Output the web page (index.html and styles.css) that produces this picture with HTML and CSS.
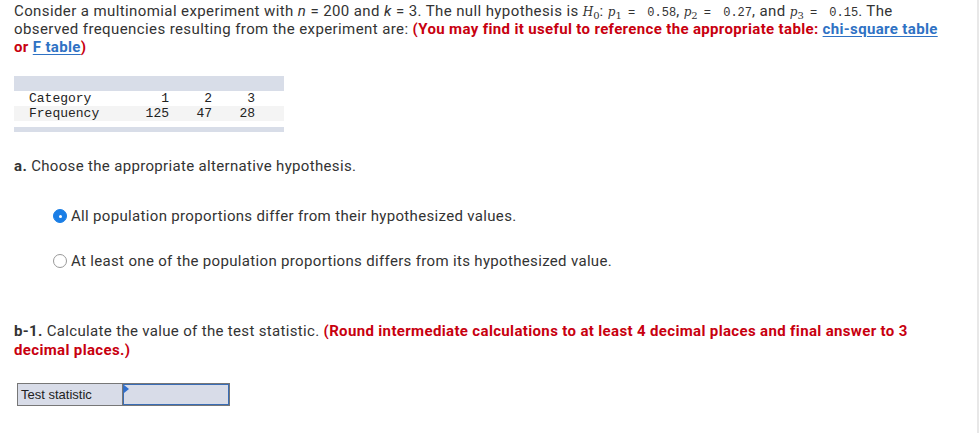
FILE: index.html
```html
<!DOCTYPE html>
<html>
<head>
<meta charset="utf-8">
<link rel="stylesheet" href="styles.css">
</head>
<body>
<div class="page">
  <p class="intro">Consider a multinomial experiment with <i>n</i> = 200 and <i>k</i> = 3. The null hypothesis is <span class="m">H</span><sub class="s">0</sub>: <span class="m">p</span><sub class="s">1</sub> <span class="mono">= 0.58</span>, <span class="m">p</span><sub class="s">2</sub> <span class="mono">= 0.27</span>, and <span class="m">p</span><sub class="s">3</sub> <span class="mono">= 0.15</span>. The<br>observed frequencies resulting from the experiment are: <b class="red">(You may find it useful to reference the appropriate table: <a href="#">chi-square table</a> or <a href="#">F table</a>)</b></p>

  <div class="datatable">
    <div class="band"></div>
    <div class="row">
      <span class="lbl">Category</span><span class="num">1</span><span class="num">2</span><span class="num">3</span>
    </div>
    <div class="row alt">
      <span class="lbl">Frequency</span><span class="num">125</span><span class="num">47</span><span class="num">28</span>
    </div>
    <div class="band thin"></div>
  </div>

  <p class="q"><b>a.</b> Choose the appropriate alternative hypothesis.</p>

  <div class="options">
    <label class="opt"><span class="radio on"></span>All population proportions differ from their hypothesized values.</label>
    <label class="opt"><span class="radio"></span>At least one of the population proportions differs from its hypothesized value.</label>
  </div>

  <p class="q q2"><b>b-1.</b> Calculate the value of the test statistic. <b class="red">(Round intermediate calculations to at least 4 decimal places and final answer to 3 decimal places.)</b></p>

  <div class="answer">
    <div class="alabel">Test statistic</div>
    <div class="ainput"><span class="tri"></span></div>
  </div>
</div>
</body>
</html>
```
FILE: styles.css
```css
html, body {
  margin: 0;
  padding: 0;
  background: #fff;
}
.page {
  width: 963px;
  height: 433px;
  padding-left: 14px;
  border-right: 2px solid #e8e8e8;
  font-family: Roboto, "Open Sans", sans-serif;
  font-size: 15px;
  letter-spacing: 0.33px;
  color: #333;
  box-sizing: content-box;
}
b { letter-spacing: 0.35px; }
p { margin: 0; }
.intro {
  padding-top: 2px;
  width: 935px;
  line-height: 18px;
  letter-spacing: 0.4px;
}
.m {
  font-family: "DejaVu Serif", serif;
  font-style: italic;
  font-size: 12px;
  line-height: 0;
  letter-spacing: 0;
}
.s {
  font-size: 10px;
  vertical-align: -3px;
  line-height: 0;
  letter-spacing: 0;
  font-family: "DejaVu Serif", serif;
}
.mono {
  font-family: "Liberation Mono", monospace;
  font-size: 12px;
  line-height: 0;
  letter-spacing: 0;
  word-spacing: 5px;
  margin-left: 2px;
}
.red { color: #c8000f; }
a {
  color: #2f72c4;
  text-decoration: underline;
  text-underline-offset: 2px;
}
.datatable {
  width: 270px;
  margin-top: 20px;
  font-family: "Liberation Mono", monospace;
  font-size: 13px;
  letter-spacing: 0;
  color: #222;
}
.band {
  height: 15px;
  background: #d8dde8;
}
.band.thin {
  height: 5px;
  margin-top: 6px;
}
.row {
  display: grid;
  grid-template-columns: 15px 110px 30px 43px 43px;
  height: 15px;
  line-height: 15px;
}
.row:first-of-type { margin-top: 1px; }
.row.alt { background: #f4f4f4; }
.row .lbl { grid-column: 2; }
.num { text-align: right; }
.q {
  margin-top: 25px;
  line-height: 18px;
}
.options {
  padding-left: 39px;
  margin-top: 32px;
  display: flex;
  flex-direction: column;
  gap: 27px;
}
.opt {
  display: flex;
  align-items: center;
  gap: 4px;
  line-height: 18px;
}
.radio {
  width: 12px;
  height: 12px;
  border: 1px solid #999;
  border-radius: 50%;
  box-sizing: content-box;
  position: relative;
  flex: none;
}
.radio.on {
  background: #1a7ee6;
  border-color: #1a7ee6;
}
.radio.on::after {
  content: "";
  position: absolute;
  left: 4.5px;
  top: 4.5px;
  width: 3px;
  height: 3px;
  border-radius: 50%;
  background: #fff;
}
.q2 {
  margin-top: 52px;
  width: 935px;
  line-height: 19px;
}
.answer {
  margin-top: 23px;
  margin-left: 3px;
  display: flex;
  width: 213px;
  height: 23px;
  border: 1px solid #777;
  box-sizing: border-box;
  background: #d8dce8;
}
.alabel {
  width: 105px;
  border-right: 1px solid #777;
  font-family: "Liberation Sans", Arial, sans-serif;
  font-size: 13px;
  letter-spacing: 0;
  color: #222;
  line-height: 21px;
  padding-left: 3px;
  box-sizing: border-box;
}
.ainput {
  flex: 1;
  border: 1.5px solid #3a6db5;
  position: relative;
}
.tri {
  position: absolute;
  left: 0;
  top: 0;
  width: 0;
  height: 0;
  border-top: 4px solid transparent;
  border-bottom: 4px solid transparent;
  border-left: 5px solid #2f6fcf;
}
```
